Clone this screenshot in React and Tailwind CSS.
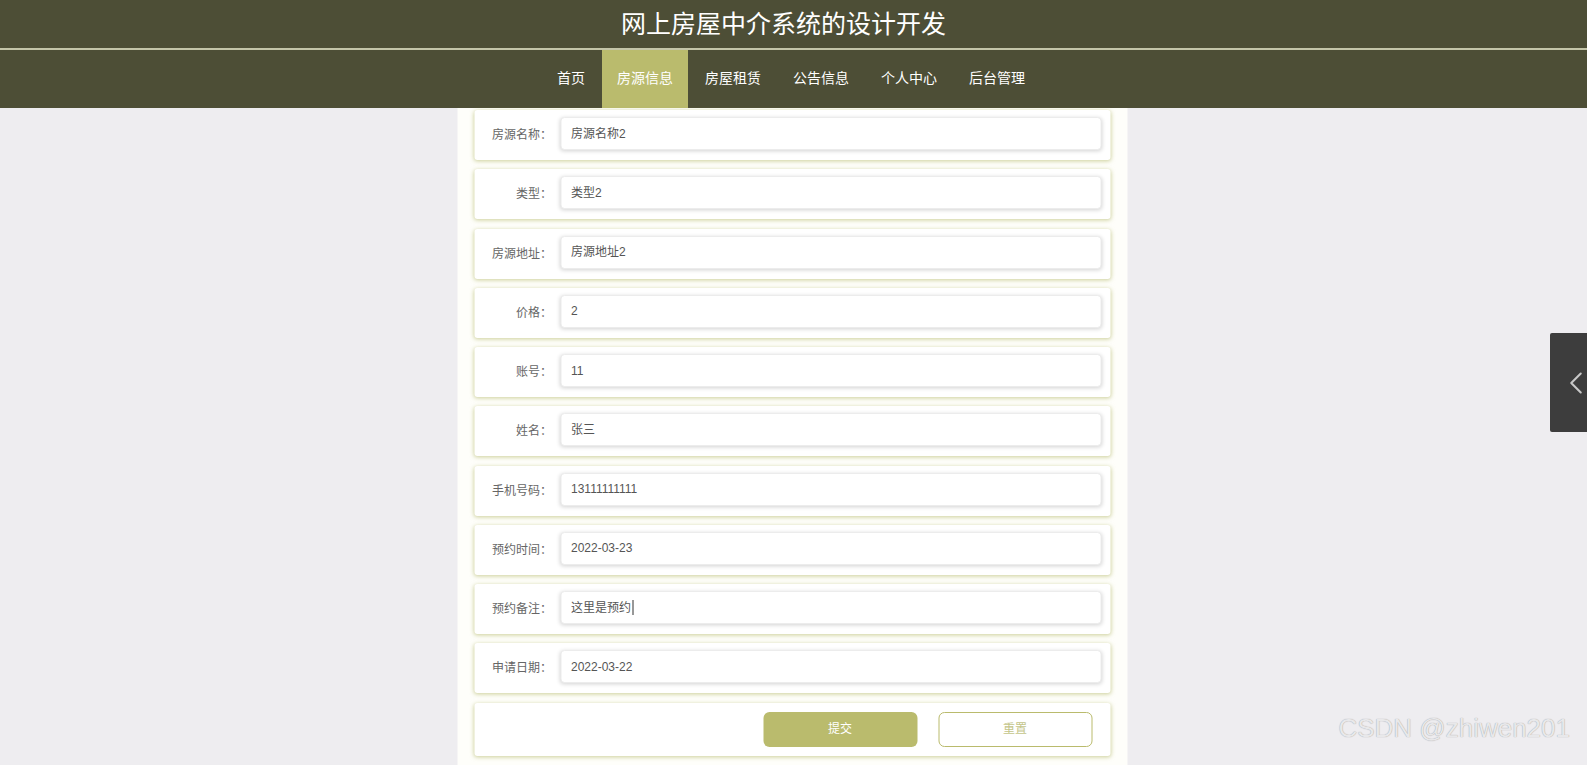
import { ChevronLeft } from "lucide-react";

const navItems = ["首页", "房源信息", "房屋租赁", "公告信息", "个人中心", "后台管理"];

const fields = [
  { label: "房源名称：", value: "房源名称2" },
  { label: "类型：", value: "类型2" },
  { label: "房源地址：", value: "房源地址2" },
  { label: "价格：", value: "2" },
  { label: "账号：", value: "11" },
  { label: "姓名：", value: "张三" },
  { label: "手机号码：", value: "13111111111" },
  { label: "预约时间：", value: "2022-03-23" },
  { label: "预约备注：", value: "这里是预约", caret: true },
  { label: "申请日期：", value: "2022-03-22" },
];

const font = { fontFamily: '"Microsoft YaHei", "Liberation Sans", "Noto Sans CJK SC", sans-serif' };

const App = () => {
  return (
    <section
      className="relative h-[765px] overflow-hidden bg-[#eeedf0]"
      style={font}
    >
      {/* 标题 */}
      <div className="h-[50px] border-b-2 border-[#c4c5a9] bg-[#4d4e36] flex items-center justify-center">
        <h1 className="text-[25px] text-white leading-none mr-[20px]">
          网上房屋中介系统的设计开发
        </h1>
      </div>

      {/* 导航 */}
      <nav className="h-[58px] bg-[#4d4e36] flex justify-center gap-[2px] pr-[5px]">
        {navItems.map((item) => (
          <a
            key={item}
            href="#"
            className={`h-full flex items-center px-[15px] pb-[2px] text-[14px] text-white ${
              item === "房源信息" ? "bg-[#babb6d]" : ""
            }`}
          >
            {item}
          </a>
        ))}
      </nav>

      {/* 表单 */}
      <div className="w-[670px] mx-auto -translate-x-[1.5px] h-[657px] bg-[#fefefa] px-[17px] pt-[2px]">
        <form className="flex flex-col gap-[9.25px]">
          {fields.map((f) => (
            <div
              key={f.label}
              className="h-[50px] flex items-center bg-white rounded-[3px] shadow-[0_1px_4px_rgba(175,180,95,0.65)]"
            >
              <label className="w-[78px] text-right text-[12px] text-[#666]">
                {f.label}
              </label>
              <div className="ml-[8px] w-[541px] h-[33px] -mt-[3px] flex items-center bg-white border border-[#ececec] rounded-[4px] shadow-[0_1px_4px_rgba(0,0,0,0.18)] px-[10px] text-[12px] text-[#555]">
                {f.value}
                {f.caret && <span className="ml-[1px] w-px h-[15px] bg-[#333]" />}
              </div>
            </div>
          ))}

          <div className="h-[53.5px] flex items-center justify-end gap-[21px] pr-[18px] bg-white rounded-[3px] shadow-[0_1px_4px_rgba(175,180,95,0.65)]">
            <button
              type="button"
              className="w-[154px] h-[35px] rounded-[6px] bg-[#babb6d] text-white text-[12px]"
            >
              提交
            </button>
            <button
              type="button"
              className="w-[154px] h-[35px] rounded-[6px] bg-white border-[1.5px] border-[#babb6d] text-[#c4c58a] text-[12px]"
            >
              重置
            </button>
          </div>
        </form>
      </div>

      {/* 右侧抽屉 */}
      <div className="absolute right-0 top-[333px] w-[37px] h-[99px] bg-[#3d3d3d] rounded-l-[2px] flex items-center justify-center">
        <ChevronLeft className="w-[38px] h-[38px] text-[#c8c8c8] ml-[14px] shrink-0" strokeWidth={1.3} />
      </div>

      {/* 水印 */}
      <div
        className="absolute right-[17px] top-[715px] text-[26px] text-[#e8e8ea] leading-none [text-shadow:0_0_1px_rgba(0,0,0,0.4)]"
        style={{ fontFamily: '"Liberation Sans", sans-serif' }}
      >
        CSDN @zhiwen201
      </div>
    </section>
  );
};

export default App;
